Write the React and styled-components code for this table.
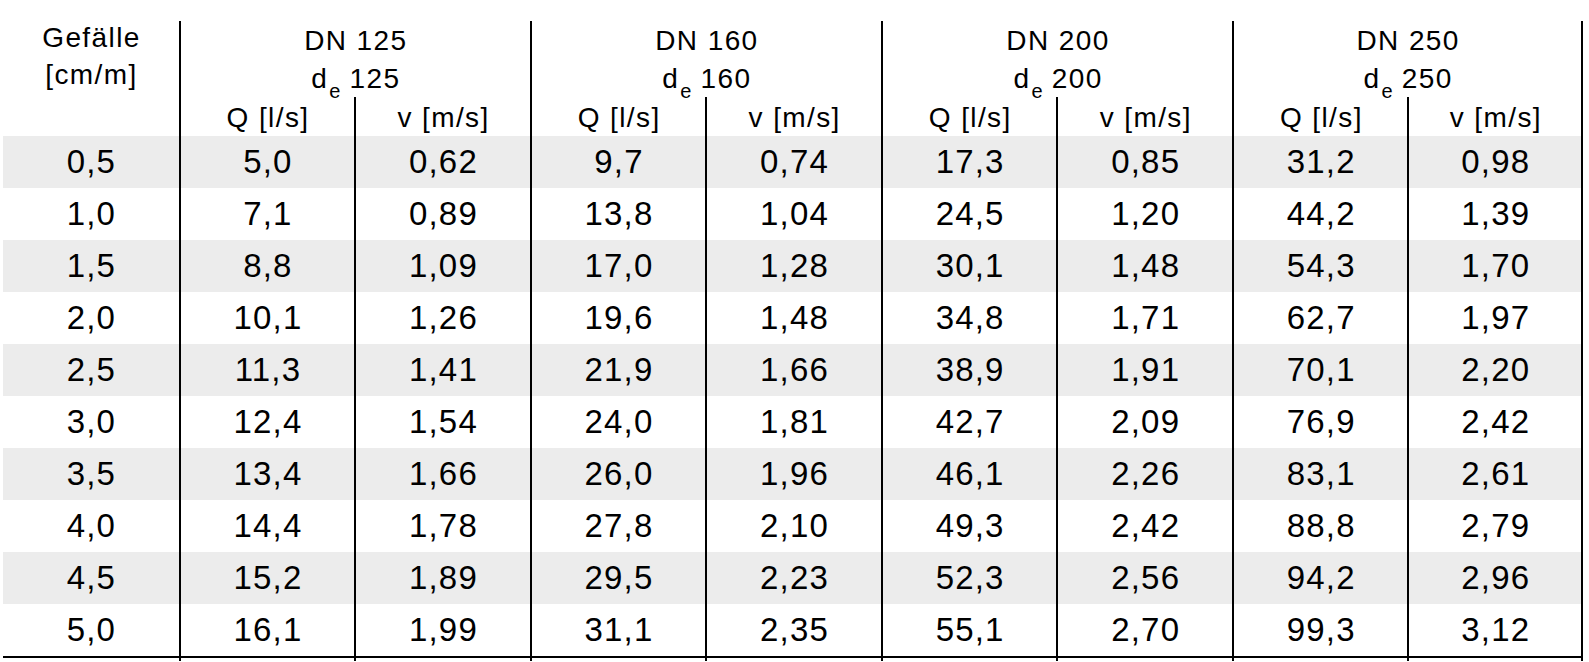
import React from "react";
import styled, { createGlobalStyle } from "styled-components";

const Global = createGlobalStyle`
  html, body { margin: 0; padding: 0; background: #fff; }
  body { font-family: "Liberation Sans", Arial, sans-serif; color: #000; }
`;

const Page = styled.div`
  padding: 21px 0 0 3px;
  width: 1580px;
`;

const Grid = styled.div`
  display: grid;
  grid-template-columns: repeat(9, 1fr);
  width: 1580px;
`;

const HeaderGrid = styled(Grid)`
  grid-template-rows: 76px 39px;
`;

const Corner = styled.div`
  grid-row: 1 / 3;
  grid-column: 1;
  text-align: center;
  font-size: 28px;
  line-height: 37px;
  letter-spacing: 1.4px;
  padding-left: 1.4px;
  margin-top: -2px;
`;

const Group = styled.div`
  grid-row: 1;
  grid-column: span 2;
  box-sizing: border-box;
  border-left: 2px solid #000;
  border-right: ${(p) => (p.$last ? "2px solid #000" : "none")};
  text-align: center;
  font-size: 28px;
  line-height: 38px;
  padding-top: 1px;
  letter-spacing: 1.4px;
  padding-left: 1.4px;
  white-space: nowrap;
`;

const Sub = styled.sub`
  font-size: 20px;
  line-height: 0;
  vertical-align: -10px;
  letter-spacing: 0;
  margin-left: 1px;
`;

const SubHead = styled.div`
  grid-row: 2;
  box-sizing: border-box;
  border-left: 2px solid #000;
  border-right: ${(p) => (p.$last ? "2px solid #000" : "none")};
  text-align: center;
  font-size: 28px;
  line-height: 36px;
  padding-top: 3px;
  letter-spacing: 1.4px;
  padding-left: 1.4px;
  white-space: nowrap;
`;

const Row = styled(Grid)`
  height: 52px;
  background: ${(p) => (p.$shade ? "#ececec" : "#fff")};
`;

const Cell = styled.div`
  box-sizing: border-box;
  border-left: ${(p) => (p.$first ? "none" : "2px solid #000")};
  border-right: ${(p) => (p.$last ? "2px solid #000" : "none")};
  text-align: center;
  font-size: 33px;
  line-height: 52px;
  letter-spacing: 1.2px;
  padding-left: 1.2px;
  white-space: nowrap;
`;

const Tail = styled(Grid)`
  border-top: 2px solid #000;
  box-sizing: border-box;
  height: 5px;
`;

const TailCell = styled.div`
  box-sizing: border-box;
  border-left: ${(p) => (p.$first ? "none" : "2px solid #000")};
  border-right: ${(p) => (p.$last ? "2px solid #000" : "none")};
`;

const groups = ["125", "160", "200", "250"];

const rows = [
  ["0,5", "5,0", "0,62", "9,7", "0,74", "17,3", "0,85", "31,2", "0,98"],
  ["1,0", "7,1", "0,89", "13,8", "1,04", "24,5", "1,20", "44,2", "1,39"],
  ["1,5", "8,8", "1,09", "17,0", "1,28", "30,1", "1,48", "54,3", "1,70"],
  ["2,0", "10,1", "1,26", "19,6", "1,48", "34,8", "1,71", "62,7", "1,97"],
  ["2,5", "11,3", "1,41", "21,9", "1,66", "38,9", "1,91", "70,1", "2,20"],
  ["3,0", "12,4", "1,54", "24,0", "1,81", "42,7", "2,09", "76,9", "2,42"],
  ["3,5", "13,4", "1,66", "26,0", "1,96", "46,1", "2,26", "83,1", "2,61"],
  ["4,0", "14,4", "1,78", "27,8", "2,10", "49,3", "2,42", "88,8", "2,79"],
  ["4,5", "15,2", "1,89", "29,5", "2,23", "52,3", "2,56", "94,2", "2,96"],
  ["5,0", "16,1", "1,99", "31,1", "2,35", "55,1", "2,70", "99,3", "3,12"],
];

export default function App() {
  return (
    <>
      <Global />
      <Page>
        <HeaderGrid>
          <Corner>
            Gefälle
            <br />
            [cm/m]
          </Corner>
          {groups.map((g, i) => (
            <Group key={g} $last={i === groups.length - 1}>
              DN {g}
              <br />
              d<Sub>e</Sub> {g}
            </Group>
          ))}
          {groups.map((g, i) => (
            <React.Fragment key={"s" + g}>
              <SubHead>Q [l/s]</SubHead>
              <SubHead $last={i === groups.length - 1}>v [m/s]</SubHead>
            </React.Fragment>
          ))}
        </HeaderGrid>
        {rows.map((r, ri) => (
          <Row key={ri} $shade={ri % 2 === 0}>
            {r.map((v, ci) => (
              <Cell key={ci} $first={ci === 0} $last={ci === r.length - 1}>
                {v}
              </Cell>
            ))}
          </Row>
        ))}
        <Tail>
          {Array.from({ length: 9 }).map((_, ci) => (
            <TailCell key={ci} $first={ci === 0} $last={ci === 8} />
          ))}
        </Tail>
      </Page>
    </>
  );
}
